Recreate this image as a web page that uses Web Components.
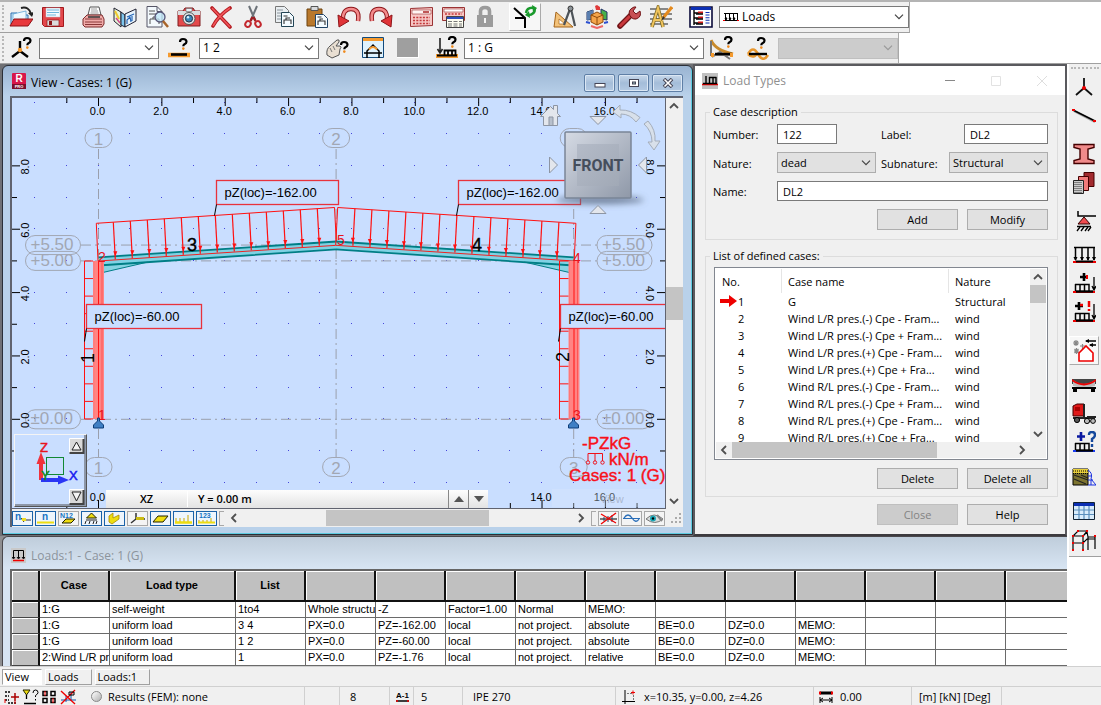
<!DOCTYPE html>
<html lang="en">
<head>
<meta charset="utf-8">
<title>View - Cases: 1 (G)</title>
<style>
  html, body { margin: 0; height: 100%; }
  body { background: #fff; font: 12px/16px "Open Sans", "Noto Sans", sans-serif; color: #000; }
</style>
</head>
<body>
<structure-app></structure-app>
<script>
/* ---------- shared helpers ---------- */
const define = (name, html, setup) => {
  const tpl = document.createElement('template');
  tpl.innerHTML = html;
  customElements.define(name, class extends HTMLElement {
    constructor() {
      super();
      this.attachShadow({ mode: 'open' }).append(tpl.content.cloneNode(true));
    }
    connectedCallback() {
      if (setup && !this.ready) { this.ready = true; setup(this, this.shadowRoot); }
    }
  });
};

const chevron = c => `url("data:image/svg+xml,%3Csvg xmlns='http://www.w3.org/2000/svg' width='10' height='6'%3E%3Cpath d='M1 .7l4 4 4-4' fill='none' stroke='%23${c}' stroke-width='1.2'/%3E%3C/svg%3E")`;

const selectCss = `
  select { appearance: none; box-sizing: border-box; margin: 0; padding: 0 18px 0 3px; height: 21px; border: 1px solid #7a7a7a;
    border-radius: 0; background: #fff ${chevron('444')} no-repeat right 4px center; font: inherit; color: #000; }
  select:disabled { background-color: #ccc; border-color: #bfbfbf; background-image: ${chevron('999')}; opacity: 1; }`;

/* ---------- icon library, 24 x 24 ---------- */
const loadComb = (c = '#000', b = '#e00') => `<path d="M1 20h22" stroke="${b}" stroke-width="2"/><path d="M4 19.5h17" stroke="#000" stroke-width="2.4"/><path d="M3 12.500h14v6M3.500 12v7M8 12v7M12.500 12v7M17 12v7" fill="none" stroke="${c}" stroke-width="1.500"/>`;
const question = (x, y, c = '#000') => `<path d="M${x} ${y + 3}q0-3 3-3 3.500 0 3.500 2.700 0 1.500-2 2.500-1.200.8-1.200 2" fill="none" stroke="${c}" stroke-width="2.200"/><circle cx="${x + 3.300}" cy="${y + 9.600}" r="1.300" fill="#f08a1c"/>`;
const ICONS = {
  open: '<path d="M2 19V8h6l2 2h9v9z" fill="#cfe8f8" stroke="#2a6fb0"/><path d="M4 9l13-3v9H4z" fill="#eef9ff" stroke="#4b9bd0" stroke-width=".7"/><path d="M1 21l4-7h19l-5 7z" fill="#e8383c" stroke="#8e1014"/><path d="M12 3q8-2 10 6" fill="none" stroke="#222" stroke-width="2"/><path d="M19 8l6-1-2 5z" fill="#222"/>',
  save: '<path d="M1.500 2.500h21v19h-19l-2-2z" fill="#e3474b" stroke="#a3191d"/><path d="M5 3h14v9H5z" fill="#f4fafe" stroke="#b9c3cc" stroke-width=".5"/><path d="M6 5h12M6 7.500h12M6 10h9" stroke="#6fb7dc"/><path d="M6 15h12v6H6z" fill="#dcdcdc" stroke="#8d1519" stroke-width=".7"/><path d="M8 16h3v4H8z" fill="#8d1519"/>',
  print: '<path d="M7 10L9 2h9l2 8z" fill="#fff" stroke="#555"/><path d="M10 4h6M10 6h7M9.500 8h8" stroke="#888" stroke-width=".8"/><path d="M2 14l4-4h15l2 4v5l-2 3H4l-2-2z" fill="#f0aaa8" stroke="#7d2a2a"/><path d="M4 14h17M4 17h17M4 19.500h17" stroke="#7d2a2a" stroke-width=".9"/><path d="M7 12h12" stroke="#333" stroke-width="1.500"/>',
  book: '<path d="M1 3l7 4v15l-7-6z" fill="#e7f5d8" stroke="#223"/><path d="M8 7l4 3v12l-4-2z" fill="#7fc7ee" stroke="#223"/><path d="M12 22V9l11-5v12z" fill="#e6f2fb" stroke="#223"/><path d="M14 12l7-3M14 19v-4l3-3 1 5M19 16v-5" stroke="#2667b8" fill="none" stroke-width="1.200"/><path d="M2 6l4 8" stroke="#f0c82d" stroke-width="2"/><path d="M3 13l4 5" stroke="#d0478f" stroke-width="1.500"/>',
  preview: '<path d="M2 1.500h10l5 5V22H2z" fill="#f3f9fd" stroke="#556"/><path d="M12 1.500v5h5" fill="none" stroke="#556"/><path d="M4 6h6M4 9h8M5 19v-5h9v5M8 14v-2h4" stroke="#555" fill="none"/><circle cx="15" cy="12" r="5" fill="#bfe6f7" fill-opacity=".75" stroke="#557" stroke-width="1.300"/><path d="M18 16l5 6" stroke="#a8642a" stroke-width="2.500"/>',
  camera: '<path d="M1 6h5l2-3h8l2 3h5v15H1z" fill="#e34a4c" stroke="#7f1c1e"/><path d="M1 6h22v4H1z" fill="#d9dde0"/><path d="M9 3.500h6v3H9z" fill="#e9f0f4" stroke="#666" stroke-width=".6"/><circle cx="12" cy="13.500" r="6" fill="#e6e9ec" stroke="#555"/><circle cx="12" cy="13.500" r="3.600" fill="#3a86b8" stroke="#234"/><circle cx="11" cy="12.300" r="1.200" fill="#d3f0ff"/>',
  delete: '<path d="M3 3l18 19M21 3Q10 10 4 21" fill="none" stroke="#b41b20" stroke-width="3.600" stroke-linecap="round"/><path d="M3 3l18 19M21 3Q10 10 4 21" fill="none" stroke="#f0555a" stroke-width="1.600"/>',
  cut: '<path d="M8 1l6 14M16 1l-6 14" stroke="#6c7278" stroke-width="2"/><path d="M11.500 12l-2 4M12.500 12l2 4" stroke="#a11c22" stroke-width="2.400"/><ellipse cx="7" cy="19" rx="2.600" ry="3" transform="rotate(30 7 19)" fill="none" stroke="#c3282e" stroke-width="2"/><ellipse cx="17" cy="19" rx="2.600" ry="3" transform="rotate(-30 17 19)" fill="none" stroke="#c3282e" stroke-width="2"/>',
  copy: '<g stroke="#777" fill="#e9eef1"><path d="M2.500 1.500h9l4 4v12h-13z"/></g><path d="M4 5h6M4 8h6M4 11h4M4 14h4" stroke="#8b949b"/><path d="M8.500 7.500h8l4 4v10h-12z" fill="#f4fbff" stroke="#245"/><path d="M11 19v-4h7v4M13 15v-2h4M10.500 11h4" fill="none" stroke="#333" stroke-width="1.100"/>',
  paste: '<path d="M2 4h15v17H2z" fill="#b9782c" stroke="#6d420f"/><path d="M6 1.500h7v4H6z" fill="#d8dadc" stroke="#555"/><path d="M10.500 9.500h8l4 4v9h-12z" fill="#f4fbff" stroke="#246"/><path d="M13 20v-4h7v4M15 16v-2h3M12.500 12h4" fill="none" stroke="#333" stroke-width="1.100"/>',
  undo: '<path d="M6 16Q5 4 14 4t7 12" fill="none" stroke="#8d1519" stroke-width="4.500"/><path d="M6 16Q5 4 14 4t7 12" fill="none" stroke="#f38a8b" stroke-width="2.600"/><path d="M1 10l1 12 10-6z" fill="#e03438" stroke="#8d1519"/>',
  redo: '<path d="M3 16Q1 4 10 4t8 12" fill="none" stroke="#8d1519" stroke-width="4.500"/><path d="M3 16Q1 4 10 4t8 12" fill="none" stroke="#f38a8b" stroke-width="2.600"/><path d="M23 10l-1 12-10-6z" fill="#e03438" stroke="#8d1519"/>',
  calc: '<path d="M1.500 3.500l22-1v18l-22 1z" fill="#f6c7c5" stroke="#9a3233"/><path d="M3 5h19v4H3z" fill="#fff5f3" stroke="#9a3233" stroke-width=".6"/><path d="M14 7h6" stroke="#a22" stroke-width="1.500"/><path d="M4 12.500h17M4 15.500h17M4 18.500h17" stroke="#c4383a" stroke-width="1.700" stroke-dasharray="2 1.300"/>',
  calcTable: '<path d="M1.500 2.500h22v13h-22z" fill="#f6c7c5" stroke="#9a3233"/><path d="M3 4h19v3H3z" fill="#fff" stroke="#9a3233" stroke-width=".6"/><path d="M4 9h17" stroke="#c4383a" stroke-width="1.700" stroke-dasharray="2 1.300"/><path d="M5.500 11.500h17v11h-17z" fill="#fdfdf0" stroke="#444"/><path d="M6 12h16v2H6z" fill="#2b4fc0"/><path d="M7 16.500h14M7 19h14M7 21h14" stroke="#777" stroke-width="1.200" stroke-dasharray="4 1.500"/>',
  lock: '<path d="M4 10h16v12H4z" fill="#9b9b9b"/><path d="M7.500 11V6q0-3.500 4.500-3.500T16.500 6v5" fill="none" stroke="#9b9b9b" stroke-width="3.600"/><path d="M11 13h2v5h-2z" fill="#f4f4f4"/>',
  refreshNode: '<path d="M1 3l11 10v10M12 13H2" fill="none" stroke="#000" stroke-width="2"/><path d="M13 8q1-6 8-5M22 3q0 7-7 7" fill="none" stroke="#1a9a2c" stroke-width="2.500"/><path d="M19 0l5 3-4 4zM16 6l-4 4 5 3z" fill="#1a9a2c"/>',
  compass: '<path d="M1 22L3 7l17 15z" fill="#f3c27a" stroke="#a5641a"/><path d="M6 19v-5l6 5z" fill="#fff" stroke="#a5641a" stroke-width=".7"/><path d="M17 4l-6 16M18 4l4 17" stroke="#4d5358" stroke-width="2.200"/><circle cx="17.500" cy="3.500" r="2.500" fill="#8b9297" stroke="#333"/>',
  cube: '<path d="M2 7l6-2v9l-6 1zM16 4l6 3v8l-6-1z" fill="#46b04a" stroke="#236"/><path d="M2 7l6-2v9l-6 1z" fill="#5a7fb0"/><path d="M10 1l2-1 3 2v3h-4z" fill="#e03a3a"/><path d="M6 10l6-3 6 3v7l-6 3-6-3z" fill="#f5a54a" stroke="#8f4a0a"/><path d="M6 10l6 2.500 6-2.500M12 12.500V20" fill="none" stroke="#8f4a0a"/><path d="M6 21l6 2 6-2" fill="none" stroke="#e66" stroke-width="2"/><path d="M1 17l4 1M23 17l-4 1" stroke="#2b4fd0" stroke-width="2"/>',
  wrench: '<path d="M3 21L14 10" stroke="#701417" stroke-width="5.500" stroke-linecap="round"/><path d="M3.500 20.500L14 10" stroke="#c9383c" stroke-width="3" stroke-linecap="round"/><path d="M13 11q-3-6 4-9l2 0-3 4 3 3 4-3q2 6-4 8-3 1-6-3z" fill="#c85054" stroke="#701417"/>',
  drafting: '<path d="M1 4h18M1 9h22M1 14h22M1 19h18" stroke="#666" stroke-width="1.300"/><path d="M3 22L9 3l5 19M5 15h9" fill="none" stroke="#7d6a2c" stroke-width="3.600"/><path d="M3 22L9 3l5 19M5 15h9" fill="none" stroke="#f2c55c" stroke-width="2"/><path d="M23 2l-9 11" stroke="#e48a1e" stroke-width="3.200"/><path d="M14 11l-2 5 4-3z" fill="#333"/>',
  layout: '<path d="M1 2h22v20H1z" fill="#fff" stroke="#0a0a3a" stroke-width="1.600"/><path d="M2 2h20v3H2z" fill="#0b2fb4"/><path d="M5 5v15M5 8h5M5 13h5M5 18h5" fill="none" stroke="#000" stroke-width="1.400"/><path d="M9 7.500h5M9 12.500h5M9 17.500h5" stroke="#d01818" stroke-width="2"/><path d="M7 9h7M7 14h7M7 19h7" stroke="#000" stroke-width="1.300"/><path d="M18.500 7v13" stroke="#0b2fb4" stroke-width="4" stroke-dasharray="1 1.600"/>',
  nodeSel: '<path d="M10 5v10L2 21M10 15l8 6" fill="none" stroke="#000" stroke-width="2.400"/><circle cx="10" cy="14" r="2.200" fill="#f59a2e"/>' + question(14, 2),
  barSel: '<path d="M1 19h22" stroke="#f59a2e" stroke-width="4.500"/><path d="M4 18.500h16" stroke="#000" stroke-width="2.600"/>' + question(13, 3),
  handSel: '<path d="M2 19q-1-6 3-9l7-6q3-1 2 2l-3 4 4 0q2 1 0 3l-1 6-7 3z" fill="#e9dfd2" stroke="#555"/><path d="M5 12l2 4M8 10l2 4" stroke="#777"/>' + question(16, 6),
  viewWin: '<path d="M1.500 1.500h21v20h-21z" fill="#dff2fd" stroke="#124a7c"/><path d="M2 2h20v3H2z" fill="#f59a2e"/><path d="M6 22v-7l6-6 6 6v7M3 17h18" fill="none" stroke="#000" stroke-width="1.500"/><path d="M8 13.500q4-5 8 0" fill="none" stroke="#f59a2e" stroke-width="2"/>',
  caseSel: '<path d="M1 20h22" stroke="#f59a2e" stroke-width="4"/><path d="M5 2v14M2.500 13l2.500 4 2.500-4" fill="none" stroke="#222" stroke-width="1.600"/><path d="M9.500 14.500h11v5h-11zM13 15v4M17 15v4M2 19.500h20" fill="none" stroke="#000" stroke-width="1.800"/>' + question(14, 1),
  modeSel: '<path d="M1 4q4 10 22 14" fill="none" stroke="#c98a2a" stroke-width="3"/><path d="M1 5v14h21M2 21l8-5 10 7" fill="none" stroke="#777" stroke-width="2"/><path d="M5 18h17" stroke="#000" stroke-width="2.400"/><path d="M1 19h3M20 19h3" stroke="#f59a2e" stroke-width="4"/>' + question(15, 1),
  modeSel2: '<path d="M2 18q5-9 10 0t10 1M2 18q6 6 10-2" fill="none" stroke="#e8962c" stroke-width="2.600"/><path d="M3 18h18" stroke="#000" stroke-width="2.400"/>' + question(12, 2),
  node: '<path d="M12 3v10l-8 7M12 13l8 7" fill="none" stroke="#111" stroke-width="1.800"/><circle cx="12" cy="13" r="2" fill="#e00"/>',
  bar: '<path d="M2 7l21 11" stroke="#aaa" stroke-width="2"/><path d="M1 6l22 11" stroke="#000" stroke-width="1.800"/><path d="M0 5h3v2H0zM21 16h3v2h-3z" fill="#e00"/>',
  section: '<path d="M2 2.500h20v3l-6 1.500v10l6 1.500v3H2v-3L8 17V7L2 5.500z" fill="#f08a8a" stroke="#400" stroke-width="1.400"/>',
  material: '<path d="M12 1.500h10v14H12z" fill="#a22a2e" stroke="#400"/><path d="M6.500 5.500h10v14h-10z" fill="#f07a7a" stroke="#400"/><path d="M1.500 9.500h10v13h-10z" fill="#ccc" stroke="#222"/><path d="M3 11v11M5 11v11M7 11v11M9 11v11" stroke="#333" stroke-dasharray="1 1"/>',
  support: '<path d="M6 2v5h18" fill="none" stroke="#000" stroke-width="1.500"/><path d="M12 8l6 7H6z" fill="#f04c50" stroke="#300"/><path d="M5 17.500h14" stroke="#000" stroke-width="1.500"/><path d="M8 18l-3 4M12 18l-3 4M16 18l-3 4M19 18l-3 4" stroke="#000" stroke-width="1.300"/>',
  loads: '<path d="M2 4.500h21" stroke="#000" stroke-width="1.500"/><path d="M3.500 4v13M10 4v13M16 4v13M22 4v13" stroke="#000" stroke-width="1.500"/><path d="M1.500 14h4l-2 4zM8 14h4l-2 4zM14 14h4l-2 4zM20 14h4l-2 4z"/><path d="M1 19h23" stroke="#e00" stroke-width="2"/><path d="M4 18.500h17" stroke="#000" stroke-width="2"/>',
  loadAdd: '<path d="M12 1v8M8 5h8" stroke="#000" stroke-width="2.600"/><path d="M15 3v4" stroke="#e00" stroke-width="2"/><path d="M22 5v12M20 14l2 4 2-4" fill="none" stroke="#000" stroke-width="1.300"/>' + loadComb(),
  loadAdd2: '<path d="M7 1v8M3 5h8" stroke="#000" stroke-width="2.600"/><path d="M8 4h3M17 0v6M17 8v2" stroke="#e00" stroke-width="2.500"/><path d="M22 3v14M20 14l2 4 2-4" fill="none" stroke="#000" stroke-width="1.300"/>' + loadComb(),
  snow: '<g stroke="#888" stroke-width="1.200"><path d="M1 4h6M4 1v6M2 2l4 4M6 2L2 6M2 12h5M4.500 9v6M2.500 10l4 4M6.500 10l-4 4M8 7h5M10.500 5v5"/></g><path d="M7 22v-8l7-7 7 7v8z" fill="#fff" stroke="#e00" stroke-width="1.600"/><path d="M14 2h10M18 6h6" stroke="#000" stroke-width="1.300"/><path d="M13 2l4-2v4zM17 6l4-2v4z"/>',
  beamDeflect: '<path d="M0 6h24v5H0z" fill="#444"/><path d="M1 7q11 8 22 0v6q-11 3-22 0z" fill="#bbb"/><path d="M0 7q12 9 24 0" fill="none" stroke="#e00" stroke-width="1.800"/><path d="M0 14h24v2h-1v3h-4v-3H5v3H1v-3H0z" fill="#000"/>',
  truck: '<path d="M1 4l4-2h7v12H1z" fill="#e01818" stroke="#400"/><path d="M3 5h5v4H3z" fill="#a00"/><path d="M12 2v14M15 15h9M1 16h22" stroke="#222" stroke-width="2"/><circle cx="5" cy="18" r="2.600" fill="#555" stroke="#000"/><circle cx="15" cy="19" r="2.600" fill="#bbb" stroke="#000"/><circle cx="21" cy="19" r="2.400" fill="#bbb" stroke="#000"/>',
  loadHelp: '<path d="M9 1v9M5 5.500h8" stroke="#0a18a0" stroke-width="2.600"/><path d="M17 4q0-3 3-3t3 3q0 2-3 4v3M20 13v3" fill="none" stroke="#14489c" stroke-width="2.400"/>' + loadComb('#000', '#1a3cf0'),
  soil: '<path d="M1 4h15v16H1z" fill="#7d7430" stroke="#000"/><path d="M1 4h15v4H1z" fill="#e8cf3c"/><path d="M1 6h15M1 8.500h15" stroke="#000" stroke-dasharray="1 1"/><path d="M2 10l14 5M2 14l12 5M9 10l7 3" stroke="#222" stroke-width="1.200"/><path d="M16 5q5 3 3 9l5 6h-8M16 11h4M16 15h5M19 15v5" fill="none" stroke="#1a30e0"/>',
  table: '<path d="M1.500 3.500h21v17h-21z" fill="#d9ecfb" stroke="#123"/><path d="M2 4h20v3H2z" fill="#0b2fb4"/><path d="M2 11h20M2 15.500h20M7 7v13M12 7v13M17 7v13" stroke="#5b8fbd" stroke-width="1.200"/>',
  frame3d: '<path d="M1 22V8l5-5h9l-4 5M1 8h10v14M11 8l4-4M1 15h10l4-4h8M15 4l1 5v13M16 9h7M23 8v13" fill="none" stroke="#000" stroke-width="1.200"/><path d="M5 2h2v2H5zM14 2h2v2h-2zM0 7h2v2H0zM10 7h2v2h-2zM22 7h2v2h-2zM0 14h2v2H0zM10 14h2v2h-2zM0 21h2v2H0zM10 21h2v2h-2z" fill="#e00"/>'
};
const svg = (name, size = 24) => `<svg viewBox="0 0 24 24" width="${size}" height="${size}" aria-hidden="true">${ICONS[name]}</svg>`;
const miniLoads = '<svg class="mini" viewBox="0 0 16 16" width="16" height="16" aria-hidden="true"><path d="M1 4.500h14M2.500 4v7M6.500 4v7M10.500 4v7M14.500 4v7M0 11.500h16" stroke="#000"/><path d="M2 9h2l-1 2zM6 9h2l-1 2zM10 9h2l-1 2z" stroke="#000"/><path d="M0 11.500h2M14 11.500h2" stroke="#e00"/></svg>';

define('tool-button', `
  <style>
    :host { display: block; flex: none; width: 32px; }
    button { display: flex; align-items: center; justify-content: center; box-sizing: border-box; width: 100%; height: var(--tool-height, 28px); padding: 0;
      border: 0; background: none; }
    :host([active]) button { background: #f7f7f7; border: solid #fff; border-width: 1px; border-right-color: #aaa; border-bottom-color: #aaa; }
    svg { display: block; }
  </style>
  <button type="button"></button>`,
  (host, root) => {
    const b = root.querySelector('button');
    b.setAttribute('aria-label', host.getAttribute('label') || host.getAttribute('icon'));
    b.innerHTML = svg(host.getAttribute('icon'));
  });

define('tool-bars', `
  <style>
    :host { display: block; border-top: 2px solid #b4b4b4; }
    .row { display: flex; align-items: center; box-sizing: border-box; height: 31px; }
    .bar { display: flex; align-items: center; box-sizing: border-box; height: 30px; padding-left: 5px; background: #f0f0f0;
      border-right: 1px solid #a8a8a8; position: relative; }
    .first .bar { height: 31px; border-bottom: 1px solid #a0a0a0; gap: 8px; }
    .last { border-bottom: 1px solid #a0a0a0; }
    .bar::before { content: ""; position: absolute; left: 2px; top: 3px; bottom: 2px; border-left: 2px dotted #b8b8b8; }
    .group { display: flex; align-items: center; }
    .layout { gap: 2px; }
    ${selectCss}
    .mode { position: relative; display: flex; align-items: center; }
    .mode select { width: 190px; height: 22px; padding-left: 22px; }
    .mini { position: absolute; left: 4px; top: 3px; }
    .narrow { width: 120px; }
    .wide { width: 240px; }
    .square { width: 22px; height: 20px; margin: 0 10px 0 4px; background: #9f9f9f; border: 1px solid #fff; border-width: 0 1px 1px 0; box-sizing: border-box; }
    .second { gap: 1px; }
    .second tool-button { width: 38px; }
    .second tool-button.small { width: 33px; }
  </style>
  <div class="row first"><div class="bar">
    <div class="group"><tool-button icon="open"></tool-button><tool-button icon="save"></tool-button></div>
    <div class="group"><tool-button icon="print"></tool-button><tool-button icon="book"></tool-button><tool-button icon="preview"></tool-button><tool-button icon="camera"></tool-button><tool-button icon="delete"></tool-button><tool-button icon="cut"></tool-button><tool-button icon="copy"></tool-button><tool-button icon="paste"></tool-button><tool-button icon="undo"></tool-button><tool-button icon="redo"></tool-button></div>
    <div class="group"><tool-button icon="calc"></tool-button><tool-button icon="calcTable"></tool-button><tool-button icon="lock"></tool-button></div>
    <div class="group"><tool-button icon="refreshNode" active></tool-button></div>
    <div class="group"><tool-button icon="compass"></tool-button><tool-button icon="cube"></tool-button><tool-button icon="wrench"></tool-button><tool-button icon="drafting"></tool-button></div>
    <div class="group layout"><tool-button icon="layout"></tool-button>
      <div class="mode"><select aria-label="Layout"><option>Loads</option></select>${miniLoads}</div></div>
  </div></div>
  <div class="row last"><div class="bar second">
    <tool-button class="small" icon="nodeSel" label="Select nodes"></tool-button>
    <select class="narrow" aria-label="Nodes"><option></option></select>
    <tool-button icon="barSel" label="Select bars"></tool-button>
    <select class="narrow" aria-label="Bars"><option>1 2</option></select>
    <tool-button class="small" icon="handSel" label="Select"></tool-button>
    <tool-button icon="viewWin" label="View"></tool-button>
    <span class="square"></span>
    <tool-button class="small" icon="caseSel" label="Select case"></tool-button>
    <select class="wide" aria-label="Case"><option>1 : G</option></select>
    <tool-button class="small" icon="modeSel" label="Select mode"></tool-button>
    <tool-button icon="modeSel2" label="Mode"></tool-button>
    <select class="narrow" aria-label="Mode" disabled><option></option></select>
  </div></div>`);

define('side-bar', `
  <style>
    :host { display: block; }
    nav { display: grid; margin-left: 2px; padding: 8px 0 2px; background: #f0f0f0; border-bottom: 1px solid #a0a0a0; position: relative; --tool-height: 29px; }
    nav::before { content: ""; position: absolute; left: 2px; right: 2px; top: 3px; border-top: 2px dotted #b8b8b8; }
    tool-button { width: 30px; }
    .gap { margin-top: 9px; }
    .near { margin-top: 5px; }
  </style>
  <nav>
    <tool-button icon="node"></tool-button><tool-button icon="bar"></tool-button>
    <tool-button class="gap" icon="section"></tool-button><tool-button icon="material"></tool-button>
    <tool-button class="gap" icon="support"></tool-button>
    <tool-button class="near" icon="loads"></tool-button><tool-button icon="loadAdd"></tool-button><tool-button icon="loadAdd2"></tool-button>
    <tool-button class="gap" icon="snow" active></tool-button>
    <tool-button class="near" icon="beamDeflect"></tool-button><tool-button icon="truck"></tool-button><tool-button icon="loadHelp"></tool-button>
    <tool-button class="near" icon="soil"></tool-button>
    <tool-button class="near" icon="table"></tool-button><tool-button icon="frame3d"></tool-button>
  </nav>`);

/* Scroll bar: "spans" holds the flex shares before, of and after the thumb. */
define('scroll-bar', `
  <style>
    :host { display: flex; background: #f0f0f0; min-width: 0; min-height: 0; }
    :host([vertical]) { flex-direction: column; }
    button { flex: none; display: flex; align-items: center; justify-content: center; width: 16px; height: 16px; padding: 0; border: 0; background: none; }
    i { min-width: 0; min-height: 0; }
    .thumb { background: #c4c4c4; }
  </style>
  <button type="button" aria-label="Back"></button><i></i><i class="thumb"></i><i></i><button type="button" aria-label="Forward"></button>`,
  (host, root) => {
    const v = host.hasAttribute('vertical');
    const arrow = d => `<svg width="10" height="10" viewBox="0 0 10 10" aria-hidden="true"><path d="${d}" fill="none" stroke="#505050" stroke-width="1.800"/></svg>`;
    const [a, b] = root.querySelectorAll('button');
    a.innerHTML = arrow(v ? 'M1 7l4-4 4 4' : 'M7 1L3 5l4 4');
    b.innerHTML = arrow(v ? 'M1 3l4 4 4-4' : 'M3 1l4 4-4 4');
    host.getAttribute('spans').split(' ').forEach((n, k) => { root.querySelectorAll('i')[k].style.flex = n; });
  });

/* ---------- structure drawing ---------- */
const U = 31.680, X0 = 98.500, Y0 = 419.300;
const px = u => X0 + u * U, py = u => Y0 - u * U;
function drawing() {
  let s = '';
  const line = (x1, y1, x2, y2, c, w = 1, extra = '') => `<path d="M${x1} ${y1}L${x2} ${y2}" stroke="${c}" stroke-width="${w}" ${extra}/>`;
  const text = (x, y, t, size, fill, extra = '') => `<text x="${x}" y="${y}" font-size="${size}" fill="${fill}" ${extra}>${t}</text>`;
  for (let i = -2; i <= 17; i++) for (let j = -2; j <= 10; j++)
    s += `<rect x="${Math.round(px(i)) - 1}" y="${Math.round(py(j)) - 1}" width="1" height="1" fill="#4646dc"/>`;
  /* grid axes */
  const axis = '#9a9fac';
  [0, 7.500, 15].forEach((u, k) => {
    s += line(px(u), 149, px(u), 457, axis, 1, 'stroke-dasharray="10 4 2 4"');
    [138.500, 467.500].forEach(y => {
      s += `<rect x="${px(u) - 13.500}" y="${y - 10}" width="27" height="19" rx="9.500" fill="none" stroke="#a2a7b3"/>` +
        text(px(u), y + 6, k + 1, 17, '#a2a7b3', 'text-anchor="middle"');
    });
  });
  [[5.500, '+5.50'], [5, '+5.00'], [0, '±0.00']].forEach(([u, t]) => {
    s += line(81, py(u), 597, py(u), axis, 1, 'stroke-dasharray="10 4 2 4"');
    [25.500, 597].forEach(x => {
      s += `<rect x="${x}" y="${py(u) - 9.500}" width="55" height="19" rx="9.500" fill="none" stroke="#a2a7b3"/>` + text(x + 5, py(u) + 5, t, 17, '#a2a7b3');
    });
  });
  /* rulers; the lower one is labelled only where the plane bar leaves it free */
  for (let i = -1; i <= 17; i++) {
    const major = i % 2 === 0;
    s += line(px(i), 98, px(i), major ? 106 : 103, '#000');
    s += line(px(i), major ? 500 : 503, px(i), 508, '#000');
    if (major) s += text(px(i) - 1, 115, i.toFixed(1), 11, '#000', 'text-anchor="middle"');
    if (i === 0 || i === 14 || i === 16) s += text(px(i) - 1, 501, i.toFixed(1), 11, '#000', 'text-anchor="middle"');
  }
  for (let j = -1; j <= 8; j++) {
    const major = j % 2 === 0;
    s += line(12, py(j), major ? 20 : 17, py(j), '#000') + line(major ? 657 : 660, py(j), 665, py(j), '#000');
    if (major) s += `<text transform="translate(29 ${py(j) + 1}) rotate(-90)" text-anchor="middle" font-size="11">${j.toFixed(1)}</text><text transform="translate(646 ${py(j) + 1}) rotate(90)" text-anchor="middle" font-size="11">${j.toFixed(1)}</text>`;
  }
  /* loads and members, one half drawn twice, the second mirrored about the ridge */
  const mid = px(7.500);
  const half = () => {
    let h = '<path d="M98.500 265L98.500 273.500 148 262z" fill="#86d3e2" stroke="#007e86"/><path d="M98.500 257.300L336.500 241.500V249L98.500 265z" fill="#7fd2e4"/><path d="M98.500 257.300L336.500 241.500M98.500 265.500L336.500 249.300" stroke="#007e86" stroke-width="1.800"/><path d="M98.500 261L336.500 245.300" stroke="#e22"/>';
    h += '<path d="M98 261L96.300 223.300 334.500 207.500 336.500 245" fill="none" stroke="#f11"/>';
    for (let i = 1; i < 14; i++) {
      const x = 96.300 + i * 17, y = 223.300 - i * 1.130, xb = 98.300 + i * 17, yb = 256.500 - i * 1.130;
      h += line(x, y, xb, yb + 4, '#f11', 1.200) + `<path d="M${xb - 2} ${yb - 4}h4l-2 5z" fill="#f11"/>`;
    }
    return h;
  };
  s += half() + `<g transform="translate(${2 * mid} 0) scale(-1 1)">${half()}</g>`;
  [[93, 84.500], [568.500, 559.500]].forEach(([x, r]) => {
    s += `<rect x="${x}" y="261" width="11" height="158" fill="#ff8484"/>` + line(x + 5.500, 261, x + 5.500, 419, '#f11') + line(x + 9, 261, x + 9, 419, '#f55') + line(x + 1, 261, x + 1, 419, '#f77') + line(r, 261, r, 419, '#f11');
    for (let i = 0; i <= 9; i++) s += line(r, 261 + i * 17.550, x, 261 + i * 17.550, '#f11');
  });
  /* callouts */
  [[216.500, 180.500, 122, 'pZ(loc)=-162.00', -2, 11], [458.500, 180.500, 122, 'pZ(loc)=-162.00', -2, 11], [86.500, 304.500, 115, 'pZ(loc)=-60.00', -2, 13], [560.500, 304.500, 115, 'pZ(loc)=-60.00', -2, 13]].forEach(([x, y, w, t, dx, dy]) => {
    s += `<rect x="${x}" y="${y}" width="${w}" height="24" fill="#c9deff" stroke="#e8323c" stroke-width="1.300"/>` + line(x, y + 24, x + dx, y + 24 + dy, '#000') + text(x + 8, y + 16, t, 13, '#000');
  });
  /* member and node numbers */
  s += text(192, 251, 3, 18, '#000', 'text-anchor="middle" stroke="#000" stroke-width=".4"') + text(477, 251, 4, 18, '#000', 'text-anchor="middle" stroke="#000" stroke-width=".4"');
  s += '<text transform="translate(94 358) rotate(-90)" text-anchor="middle" font-size="18">1</text><text transform="translate(569 357) rotate(-90)" text-anchor="middle" font-size="18">2</text>';
  [[102, 262, 2], [341, 245, 5], [577, 263, 4], [102, 420, 1], [577, 420, 3]].forEach(([x, y, t]) => { s += text(x, y, t, 14, '#e8141c', 'text-anchor="middle"'); });
  [98.500, 573.500].forEach(x => { s += `<path d="M${x - 5} 428v-3l4-4v-3h2v3l4 4v3z" fill="#3f7fc4" stroke="#0d3d78"/>`; });
  /* unit legend */
  const bold = 'stroke="#f8101a" stroke-width=".4"';
  s += text(582, 449, '-PZkG', 17, '#f8101a', bold) + text(609, 465, 'kN/m', 17, '#f8101a', bold) + text(569, 481, 'Cases: 1 (G)', 17, '#f8101a', bold);
  s += '<path d="M588 461v-7.500h14.500v7.500M595 453.500v7.500" fill="none" stroke="#f0101a"/><g fill="none" stroke="#f0101a"><circle cx="588" cy="462.500" r="1.700"/><circle cx="595" cy="462.500" r="1.700"/><circle cx="602.500" cy="462.500" r="1.700"/></g>';
  s += '<rect x="552" y="489" width="113" height="18" fill="#dbe8fb" fill-opacity=".35"/>' + text(600, 503, 'View', 11, '#8f9bb0', 'fill-opacity=".6"');
  /* view cube */
  s += `<defs><linearGradient id="face" x1="0" y1="0" x2="1" y2="1"><stop offset="0" stop-color="#d5dae4"/><stop offset="1" stop-color="#8f98a8"/></linearGradient>
    <linearGradient id="inner" x1="0" y1="0" x2="1" y2="1"><stop offset="0" stop-color="#b4bbc8"/><stop offset="1" stop-color="#a1a9b6"/></linearGradient>
    <filter id="soft" x="-20%" y="-80%" width="140%" height="260%"><feGaussianBlur stdDeviation="3"/></filter></defs>
    <ellipse cx="600" cy="200" rx="44" ry="4" fill="#5d6b82" fill-opacity=".8" filter="url(#soft)"/>
    <rect x="565" y="132" width="66" height="66" rx="1" fill="url(#face)" stroke="#7a8596" stroke-width="1.500"/>
    <rect x="577" y="144" width="42" height="42" fill="url(#inner)"/>
    <text x="598" y="171" text-anchor="middle" font-family="Roboto, sans-serif" font-weight="700" font-size="16" fill="#454e5c">FRONT</text>
    <g fill="#e3e6ec" stroke="#8d95a3"><path d="M590 116.500h16l-8 8zM590 213.500h16l-8-8zM549.500 157v16l8-8zM646.500 157v16l-8-8z"/>
    <path d="M543.500 125.500v-9h-3l10-10 3 3v-4h4v8l3 3h-3v9z"/><path d="M549 125v-8h4v8" fill="#b8c0cc"/></g>
    <g fill="#d8e0ea" stroke="#a4adba"><path d="M640 117.500q-9-8-20-7.500l0-5-7 7 8 6v-4q9 0 15 8z"/><path d="M648 121q8 9 7 20h5l-6 9-6-8h4q0-11-8-18z"/></g>`;
  return s;
}

const mini = body => `<svg viewBox="0 0 19 13" width="19" height="13" aria-hidden="true">${body}</svg>`;
const n = (t, x, y, s) => `<text x="${x}" y="${y}" font-family="Liberation Sans" font-weight="700" font-size="${s}" fill="#1674c4">${t}</text>`;
const DISPLAY = [
  n('n', 2, 8, 10) + '<path d="M8 6l3 4M11 8h7" stroke="#333"/><path d="M9 6h4v3H9z" fill="#ed2"/>',
  n('n', 6, 8, 10) + '<path d="M1 10.500h17" stroke="#ed1" stroke-width="2"/>',
  n('N12', 1, 6, 7) + '<path d="M3 11l4-4h9l-4 4z" fill="#ed1" stroke="#220"/>',
  '<path d="M9.500 1l5 5h-10z" fill="#ed1" stroke="#220"/><path d="M4 8h11M4 9l-1 3M8 9l-1 3M12 9l-1 3M15 9l-1 3" stroke="#222"/>',
  '<path d="M4 4l4-3v5l6-3v4l-7 5-3-2z" fill="#ed1" stroke="#aa8c00" stroke-width=".8"/>',
  '<path d="M8 1v6l-5 4M8 7h9" fill="none" stroke="#333" stroke-width="1.500"/><path d="M8 5h8v3H8z" fill="#cb1"/>',
  '<path d="M2 10l5-6h10l-5 6z" fill="#ed1" stroke="#220"/>',
  '<path d="M2 6v4M6 6v4M10 6v4M14 3v7" stroke="#caa800"/><path d="M1 10.500h17" stroke="#ed1" stroke-width="2.500"/>',
  n('123', 2, 6, 7) + '<path d="M2 8v2M6 8v2M10 8v2M14 6v4" stroke="#caa800"/><path d="M1 10.500h17" stroke="#ed1" stroke-width="2"/>'
];
const RESULT = [
  '<path d="M1 7h17" stroke="#000"/><path d="M5 5v4M9 4v6M13 3v7" stroke="#246"/><path d="M2 2l15 9M17 1L2 12" stroke="#e00" stroke-width="1.300"/>',
  '<path d="M1 6.500h17" stroke="#2a6eb8"/><path d="M2 6q4-6 8 0t7 1" fill="none" stroke="#2a6eb8" stroke-width="1.300"/>',
  '<path d="M1 7q8-8 17 0-8 7-17 0z" fill="#d8dcdc" stroke="#777"/><circle cx="8" cy="6.500" r="3" fill="#1ba5b5"/><circle cx="8" cy="6.500" r="1.200"/><path d="M12 3l5 6" stroke="#888" stroke-width="2"/>'
];

define('view-window', `
  <style>
    :host { display: flex; flex-direction: column; box-sizing: border-box; margin: 1px 0 1px 2px; padding: 0 9px 7px 7px; border: 1px solid #2a2f38; border-radius: 6px 6px 0 0;
      background: linear-gradient(#9ab4d2, #b9d1ea 30px); box-shadow: inset -1px -1px #5ccbe0; overflow: hidden; }
    header { display: flex; align-items: center; height: 30px; flex: none; gap: 4px; padding-left: 1px; }
    header h1 { flex: 1; margin: 0; font-size: 12px; font-weight: 400; padding-top: 4px; }
    header svg { display: block; }
    .controls { display: flex; gap: 3px; padding-top: 3px; }
    .controls button { display: flex; align-items: center; justify-content: center; box-sizing: border-box; width: 31px; height: 18px; padding: 0; border: 1px solid #5f7fa6; border-radius: 2px;
      background: linear-gradient(#c8d8ea, #a4bdd9 50%, #b4cae3); box-shadow: inset 0 0 0 1px #dbe7f4; }
    .frame { flex: 1; display: grid; grid-template: minmax(0, 1fr) auto / minmax(0, 1fr) 17px; min-height: 0; border: solid #60636f; border-width: 2px 0 0 2px; background: #f0f0f0; }
    .canvas { position: relative; min-height: 0; overflow: hidden; background: #c9deff; border: solid #60636f; border-width: 0 1px 1px 0; }
    .canvas > svg { display: block; width: 100%; height: 100%; font-family: "Liberation Sans", Arial, sans-serif; }
    .axes { position: absolute; left: 2px; bottom: 1px; width: 71px; height: 71px; background: #c9deff; border: 1px solid; border-color: #f4f4f4 #555 #555 #f4f4f4; box-shadow: inset -2px -2px #8d97a8; }
    .axes svg { display: block; }
    .plane { position: absolute; left: 94px; right: 177px; bottom: 0; height: 18px; display: flex; align-items: center; background: linear-gradient(#fdfdfd, #e3e3e3); font-weight: 600; font-size: 11px; }
    .plane span { flex: 1; padding-left: 10px; }
    .plane .name { flex: none; box-sizing: border-box; width: 82px; text-align: center; border-right: 1px solid #fff; padding: 0; }
    .plane button { width: 20px; height: 18px; padding: 0; border: 0; border-left: 1px solid #888; background: none; display: flex; align-items: center; justify-content: center; }
    .tools { grid-column: 1 / -1; display: flex; align-items: center; height: 18px; gap: 2px; }
    .tools button { flex: none; display: flex; align-items: center; justify-content: center; box-sizing: border-box; width: 21px; height: 15px; padding: 0; border: 1px solid #a8a8a8; background: #f4f4f4; }
    .tools button.on { border-color: #1b62a8; background: #eef5fc; }
    .tools scroll-bar { flex: 1; }
    .stub { flex: none; box-sizing: border-box; width: 5px; height: 15px; border: 1px solid #a8a8a8; border-right: 0; }
    .grip { width: 16px; height: 16px; flex: none; }
  </style>
  <header>
    <svg width="16" height="18" viewBox="0 0 16 18" aria-hidden="true"><rect x="1" y="1" width="14" height="16" rx="1" fill="#d8174a"/><rect x="1" y="12" width="14" height="5" fill="#7c0f2c"/><text x="8" y="10" text-anchor="middle" font-family="Liberation Sans" font-weight="700" font-size="10" fill="#fff">R</text><text x="8" y="16" text-anchor="middle" font-family="Liberation Sans" font-weight="700" font-size="4" fill="#fff">PRO</text></svg>
    <h1>View - Cases: 1 (G)</h1>
    <div class="controls">
      <button type="button" aria-label="Minimize"><svg width="12" height="10"><rect x="1" y="5.500" width="10" height="3.500" fill="#fff" stroke="#445"/></svg></button>
      <button type="button" aria-label="Restore"><svg width="12" height="10"><rect x="1.500" y="1.500" width="9" height="7" fill="#fff" stroke="#445"/><rect x="4.500" y="4" width="3" height="2" fill="#9bb" stroke="#445"/></svg></button>
      <button type="button" aria-label="Close"><svg width="12" height="10"><path d="M2 1l8 8M10 1L2 9" stroke="#445" stroke-width="3.600"/><path d="M2.500 1.500l7 7M9.500 1.500l-7 7" stroke="#fff" stroke-width="1.600"/></svg></button>
    </div>
  </header>
  <div class="frame">
    <div class="canvas">
      <svg class="model" viewBox="12 98 653 410" preserveAspectRatio="xMinYMin slice"></svg>
      <div class="axes"><svg width="71" height="71" viewBox="0 0 71 71" aria-hidden="true">
        <g stroke-width="1"><path d="M54.500 3.500h14v14h-14zM54.500 54.500h14v14h-14z" fill="#d9d9d9" stroke="#fff"/><path d="M54.500 18h14v-14M54.500 69h14v-14" fill="none" stroke="#444" stroke-width="2"/><path d="M57 15l4.500-8 4.500 8zM57 57h9l-4.500 9z" fill="#f4f4f4" stroke="#222"/></g>
        <rect x="31.500" y="22.500" width="17" height="17" fill="none" stroke="#118833"/>
        <path d="M26 45V27" stroke="#f0323c" stroke-width="4"/><path d="M26 17l4.500 12h-9z" fill="#f0323c"/><path d="M26 45h18" stroke="#2a35f5" stroke-width="4"/><path d="M54 45l-11-4.500v9z" fill="#2a35f5"/>
        <text x="25" y="17" font-family="Liberation Sans" font-size="13" fill="#e8141c" stroke="#e8141c" stroke-width=".5">Z</text><text x="26" y="45" font-family="Liberation Sans" font-size="13" fill="#118822" stroke="#182" stroke-width=".5">Y</text><text x="54" y="45" font-family="Liberation Sans" font-size="13" fill="#1a20f0" stroke="#1a20f0" stroke-width=".5">X</text></svg></div>
      <div class="plane"><span class="name">XZ</span><span>Y = 0.00 m</span>
        <button type="button" aria-label="Up"><svg width="10" height="6"><path d="M0 6h10L5 0z" fill="#555"/></svg></button><button type="button" aria-label="Down"><svg width="10" height="6"><path d="M0 0h10L5 6z" fill="#555"/></svg></button></div>
    </div>
    <scroll-bar vertical spans="173 33 173"></scroll-bar>
    <div class="tools"></div>
  </div>`,
  (host, root) => {
    root.querySelector('.model').innerHTML = drawing();
    root.querySelector('.tools').innerHTML =
      DISPLAY.map((b, k) => `<button type="button" class="${k === 2 || k === 5 ? '' : 'on'}" aria-label="Display ${k + 1}">${mini(b)}</button>`).join('') +
      '<span class="stub"></span><scroll-bar spans="84 163 84"></scroll-bar><span class="stub"></span>' +
      RESULT.map((b, k) => `<button type="button" aria-label="Result ${k + 1}">${mini(b)}</button>`).join('') +
      '<svg class="grip" viewBox="0 0 16 16" aria-hidden="true"><path d="M12 4h2M8 8h2M12 8h2M4 12h2M8 12h2M12 12h2" stroke="#aaa" stroke-width="2"/></svg>';
  });

/* ---------- load types dialog ---------- */
const CASES = [['1', 'G', 'Structural'], ['2', 'Wind L/R pres.(-) Cpe - Fram...', 'wind'], ['3', 'Wind L/R pres.(-) Cpe + Fram...', 'wind'], ['4', 'Wind L/R pres.(+) Cpe - Fram...', 'wind'], ['5', 'Wind L/R pres.(+) Cpe + Fra...', 'wind'], ['6', 'Wind R/L pres.(-) Cpe - Fram...', 'wind'], ['7', 'Wind R/L pres.(-) Cpe + Fram...', 'wind'], ['8', 'Wind R/L pres.(+) Cpe - Fram...', 'wind'], ['9', 'Wind R/L pres.(+) Cpe + Fra...', 'wind']];
define('load-types', `
  <style>
    :host { display: flex; flex-direction: column; box-sizing: border-box; border: 2px solid #5a5a5e; border-bottom-color: #3c3a3e; background: #f0f0f0; font-size: 11px; line-height: 16px; }
    header { flex: none; display: flex; align-items: center; height: 29px; padding: 0 17px 0 7px; gap: 5px; background: #fff; color: #8f8f8f; font-size: 12px; }
    header .icon { display: flex; width: 16px; height: 16px; background: #c0c0c0; }
    header h2 { flex: 1; margin: 0; font-size: 12px; font-weight: 400; }
    header button { width: 12px; height: 12px; padding: 0; border: 0; background: none; display: flex; margin-left: 29px; }
    form { flex: 1; display: flex; flex-direction: column; padding: 9px 7px 9px 10px; min-height: 0; }
    fieldset { margin: 0; border: 1px solid #dcdcdc; min-width: 0; }
    legend { padding: 0 3px; margin-left: -3px; }
    .case { display: grid; grid-template-columns: 64px 104px 68px minmax(0, 1fr); row-gap: 8px; align-items: center; padding: 4px 9px 9px 7px; }
    label { padding-top: 2px; }
    input { box-sizing: border-box; height: 20px; margin: 0; padding: 0 5px; border: 1px solid #7a7a7a; font: inherit; background: #fff; min-width: 0; }
    #number { width: 60px; } #label { width: 84px; justify-self: end; }
    #name { grid-column: 2 / -1; }
    ${selectCss}
    select { width: 99px; background-color: #e1e1e1; border-color: #adadad; }
    .actions { grid-column: 1 / -1; display: flex; justify-content: flex-end; gap: 9px; }
    .actions button { width: 81px; height: 21px; padding: 0; border: 1px solid #adadad; background: #e1e1e1; font: inherit; color: #000; }
    .actions button:disabled { background: #ccc; border-color: #bfbfbf; color: #838383; }
    .list { flex: 1; display: flex; flex-direction: column; margin-top: 8px; padding: 3px 9px 7px 8px; min-height: 0; gap: 8px; }
    .list legend { margin-left: -4px; }
    .box { flex: 1 1 0; display: grid; grid-template: minmax(0, 1fr) 16px / minmax(0, 1fr) 16px; border: 1px solid #828790; padding: 1px; background: #fff; min-height: 0; }
    .clip { overflow: hidden; min-height: 0; }
    .corner { background: #f0f0f0; }
    table { border-collapse: collapse; table-layout: fixed; width: 100%; }
    th, td { padding: 0 0 0 6px; text-align: left; font-weight: 400; white-space: nowrap; overflow: hidden; height: 17px; line-height: 17px; }
    th { height: 24px; box-shadow: inset -1px 0 #e5e5e5; }
    th:last-child { box-shadow: none; }
    td:first-child { padding-left: 22px; position: relative; }
    td svg { position: absolute; left: 4px; top: 2px; }
    .bottom { margin: 7px 10px 0 0; }
  </style>
  <header><span class="icon"><svg width="16" height="16" viewBox="0 0 16 16" aria-hidden="true"><path d="M0 11.500h16" stroke="#e00" stroke-width="1.500"/><path d="M1 10.500h14M4 3v7M7.500 4v6M11 4v6M14 4v6M7 4.500h7.500" stroke="#000" stroke-width="1.400"/></svg></span><h2>Load Types</h2>
    <button type="button" aria-label="Minimize"><svg width="12" height="12"><path d="M1 5.500h10" stroke="#888"/></svg></button><button type="button" aria-label="Maximize"><svg width="12" height="12"><path d="M1.500 1.500h9v9h-9z" fill="none" stroke="#e2e2e2"/></svg></button><button type="button" aria-label="Close window"><svg width="12" height="12"><path d="M1 1l10 10M11 1L1 11" stroke="#dedede"/></svg></button></header>
  <form>
    <fieldset class="case"><legend>Case description</legend>
      <label for="number">Number:</label><input id="number" value="122"><label for="label">Label:</label><input id="label" value="DL2">
      <label for="nature">Nature:</label><select id="nature"><option>dead</option></select><label for="sub">Subnature:</label><select id="sub"><option>Structural</option></select>
      <label for="name">Name:</label><input id="name" value="DL2">
      <div class="actions"><button type="button">Add</button><button type="button">Modify</button></div>
    </fieldset>
    <fieldset class="list"><legend>List of defined cases:</legend>
      <div class="box"><div class="clip"><table><colgroup><col style="width:66px"><col style="width:167px"><col></colgroup><thead><tr><th>No.</th><th>Case name</th><th>Nature</th></tr></thead><tbody></tbody></table></div>
        <scroll-bar vertical spans="0 18 122"></scroll-bar><scroll-bar spans="0 205 77"></scroll-bar><span class="corner"></span></div>
      <div class="actions"><button type="button">Delete</button><button type="button">Delete all</button></div>
    </fieldset>
    <div class="actions bottom"><button type="button" disabled>Close</button><button type="button">Help</button></div>
  </form>`,
  (host, root) => {
    const arrow = '<svg width="17" height="12" viewBox="0 0 17 12" aria-hidden="true"><path d="M0 4h9V0l8 6-8 6V8H0z" fill="#e00"/></svg>';
    root.querySelector('tbody').innerHTML = CASES.map((r, k) => `<tr>${r.map((c, i) => `<td>${k === 0 && i === 0 ? arrow : ''}${c}</td>`).join('')}</tr>`).join('');
  });

/* ---------- loads table ---------- */
const LOADS = [
  ['1:G', 'self-weight', '1to4', 'Whole structu', '-Z', 'Factor=1.00', 'Normal', 'MEMO:'],
  ['1:G', 'uniform load', '3 4', 'PX=0.0', 'PZ=-162.00', 'local', 'not project.', 'absolute', 'BE=0.0', 'DZ=0.0', 'MEMO:'],
  ['1:G', 'uniform load', '1 2', 'PX=0.0', 'PZ=-60.00', 'local', 'not project.', 'absolute', 'BE=0.0', 'DZ=0.0', 'MEMO:'],
  ['2:Wind L/R pr', 'uniform load', '1', 'PX=0.0', 'PZ=-1.76', 'local', 'not project.', 'relative', 'BE=0.0', 'DZ=0.0', 'MEMO:']
];
define('loads-window', `
  <style>
    :host { display: block; margin-left: 2px; padding-left: 7px; border: solid #4a484c; border-width: 1px 0 0 1px; border-radius: 6px 0 0 0; background: linear-gradient(#bfcddb, #d7e4f2 31px); overflow: hidden; }
    header { display: flex; align-items: center; gap: 5px; height: 32px; padding: 0; box-sizing: border-box; }
    header span { width: 15px; height: 15px; background: #c9c9c9; display: flex; align-items: center; justify-content: center; margin: 4px 0 0 1px; }
    h2 { margin: 5px 0 0; font-size: 12px; font-weight: 400; color: #8c949c; }
    .scroll { overflow: hidden; border: solid #666; border-width: 2px 0 0 2px; background: #fff; }
    table { table-layout: fixed; width: 1134px; border-collapse: separate; border-spacing: 0; font: 11px/15px "Liberation Sans", Arial, sans-serif; }
    th, td { box-sizing: border-box; overflow: hidden; white-space: nowrap; border: solid #6a6a6a; border-width: 0 1px 1px 0; height: 16px; padding: 0 2px; text-align: left; }
    td { padding-right: 0; }
    th { background: #c0c0c0; box-shadow: inset 1px 1px #fff; text-align: center; }
    thead th { height: 31px; border-width: 0 2px 2px 0; border-color: #111; }
    tbody th { border-width: 0 2px 1px 0; border-color: #6a6a6a #111 #444; }
  </style>
  <header><span><svg width="13" height="13" viewBox="0 0 13 13" aria-hidden="true"><path d="M1.500 9V1.500h10V9M6.500 2v7M0 8l1.500 2L3 8M5 8l1.500 2L8 8M10 8l1.500 2L13 8" fill="none" stroke="#000"/><path d="M1 11.500h11" stroke="#e00" stroke-width="1.500"/></svg></span><h2>Loads:1 - Case: 1 (G)</h2></header>
  <div class="scroll"><table><colgroup></colgroup><thead></thead><tbody></tbody></table></div>`,
  (host, root) => {
    const cols = [28, 70, 126, ...Array(13).fill(70)], heads = ['', 'Case', 'Load type', 'List'];
    root.querySelector('colgroup').innerHTML = cols.map(w => `<col style="width:${w}px">`).join('');
    root.querySelector('thead').innerHTML = `<tr>${cols.map((_, i) => `<th>${heads[i] || ''}</th>`).join('')}</tr>`;
    root.querySelector('tbody').innerHTML = LOADS.map(r => `<tr><th></th>${cols.slice(1).map((_, i) => `<td>${r[i] || ''}</td>`).join('')}</tr>`).join('');
  });

define('window-tabs', `
  <style>
    :host { display: flex; box-sizing: border-box; height: 20px; padding: 2px 2px 1px; gap: 3px; background: #f0f0f0; border-top: 1px solid #d0d0d0; font-size: 11px; }
    button { display: block; height: 16px; padding: 0 12px 0 2px; border: solid; border-width: 1px; border-color: #fff #a0a0a0 #a0a0a0 #fff; background: none; font: inherit; line-height: 14px; text-align: left; }
    button[aria-selected=true] { background: #fff; border-color: #a0a0a0 #fff #fff #a0a0a0; }
  </style>
  <button role="tab" aria-selected="true">View</button><button role="tab">Loads</button><button role="tab">Loads:1</button>`);

define('status-bar', `
  <style>
    :host { display: flex; align-items: stretch; box-sizing: border-box; height: 19px; background: #f0f0f0; border-top: 1px solid #d0d0d0; font-size: 11px; overflow: hidden; white-space: nowrap; }
    div { display: flex; align-items: center; box-sizing: border-box; flex: none; border-right: 1px solid #d0d0d0; padding-top: 1px; padding-left: 10px; }
    .tools { width: 305px; padding-left: 3px; gap: 2px; }
    .dot { width: 11px; height: 11px; border-radius: 50%; border: 1px solid #888; box-sizing: border-box; background: linear-gradient(135deg, #fff, #b0b0b0); margin: 0 4px 0 12px; }
  </style>
  <div class="tools">
    <svg width="17" height="16" viewBox="0 0 17 16"><path d="M2 3h6M2 7h4M2 11h4M5 14h8" stroke="#000" stroke-width="1.500" stroke-dasharray="2 1"/><path d="M12 4v8M8 8h8" stroke="#a00" stroke-width="1.500"/><path d="M2 10v4M12 12v3" stroke="#e00"/></svg>
    <svg width="17" height="16" viewBox="0 0 17 16"><path d="M1 1h7L4.500 6z" fill="#ed1" stroke="#220"/><path d="M4.500 6v4M2 14.500h12" stroke="#000" stroke-width="1.300"/><path d="M11 4q0-3 2.500-3T16 3.500q0 1.500-2.500 3V8M13.500 10v1.500" fill="none" stroke="#000"/></svg>
    <svg width="17" height="16" viewBox="0 0 17 16"><path d="M2 2.500h4v4H2zM10 2.500h4v4h-4zM2 9.500h4v4H2zM10 9.500h4v4h-4z" fill="#fff" stroke="#000" stroke-width="1.500"/><path d="M4 2v5M12 9v5" stroke="#e00"/></svg>
    <svg width="17" height="16" viewBox="0 0 17 16"><path d="M1 11h15M6 7v6M11 3v9" stroke="#15a"/><path d="M1 2l14 13M15 1L1 15" stroke="#e00" stroke-width="1.400"/><path d="M9 3h5v3H9z" fill="none" stroke="#000"/></svg>
    <span class="dot"></span>Results (FEM): none</div>
  <div style="width:35px"></div><div style="width:50px">8</div>
  <div style="width:24px;padding-left:6px"><svg width="14" height="14" viewBox="0 0 14 14"><text x="0" y="8" font-family="Liberation Sans" font-size="8" font-weight="700">A-1</text><path d="M0 11h13" stroke="#000" stroke-width="1.500"/><path d="M0 11h2M11 11h2" stroke="#e00" stroke-width="1.500"/></svg></div>
  <div style="width:49px;padding-left:7px">5</div><div style="width:153px">IPE 270</div>
  <div style="width:198px;padding-left:6px;gap:8px"><svg width="14" height="14" viewBox="0 0 14 14"><path d="M3 0v14M0 11.500h13" stroke="#000"/><path d="M5 3.500h6M11.500 5v5" stroke="#777" stroke-dasharray="2 1"/><path d="M9 2.500h4M11 .5v4" stroke="#e00"/></svg>x=10.35, y=0.00, z=4.26</div>
  <div style="width:98px;padding-left:5px;gap:7px"><svg width="14" height="14" viewBox="0 0 14 14"><path d="M1 3h12" stroke="#000" stroke-width="3"/><path d="M0 1.500h2v3H0zM12 1.500h2v3h-2z" fill="#e00"/><path d="M1 10h12M1 7v6M13 7v6M4 8l-3 2 3 2M10 8l3 2-3 2" fill="none" stroke="#000"/></svg>0.00</div>
  <div style="width:90px;padding-left:7px">[m] [kN] [Deg]</div>`);

define('structure-app', `
  <style>
    :host { display: flex; flex-direction: column; min-height: 100vh; }
    .work { flex: 1; display: grid; grid-template-columns: minmax(0, 1fr) 34px; }
    .mdi { display: flex; flex-direction: column; min-width: 0; background: #8e8e90; }
    .top { flex: 1; display: grid; grid-template-columns: minmax(0, 1fr) 374px; background: #6f7074; }
  </style>
  <tool-bars></tool-bars>
  <div class="work">
    <div class="mdi"><div class="top"><view-window></view-window><load-types></load-types></div><loads-window></loads-window></div>
    <side-bar></side-bar>
  </div>
  <window-tabs role="tablist"></window-tabs>
  <status-bar></status-bar>`);
</script>
</body>
</html>
